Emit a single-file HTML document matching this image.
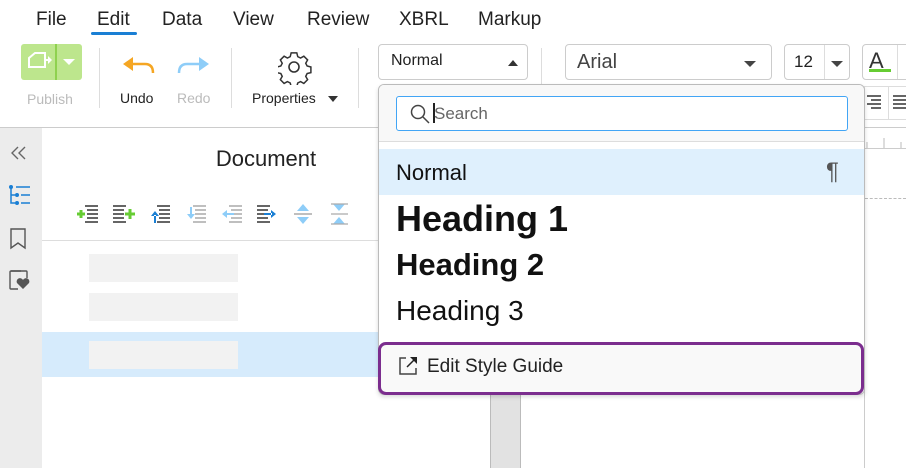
<!DOCTYPE html>
<html><head><style>
*{box-sizing:border-box;margin:0;padding:0}
body{width:906px;height:468px;overflow:hidden;background:#fff;font-family:"Liberation Sans",sans-serif;position:relative;color:#222}
.a{position:absolute}
.menu span{position:absolute;top:9px;font-size:19px;color:#222}
.lbl{position:absolute;font-size:14px;color:#222}
.sep{position:absolute;width:1px;background:#ddd}
.box{position:absolute;border:1px solid #ccc;border-radius:4px;background:#fff}
.tri{position:absolute;width:0;height:0;border-left:6px solid transparent;border-right:6px solid transparent}
</style></head><body>
<div class="menu">
<span style="left:36px">File</span>
<span style="left:97px">Edit</span>
<span style="left:162px">Data</span>
<span style="left:233px">View</span>
<span style="left:307px">Review</span>
<span style="left:399px">XBRL</span>
<span style="left:478px">Markup</span>
</div>
<div class="a" style="left:91px;top:32px;width:46px;height:3px;background:#1a7fd4;border-radius:2px"></div>

<!-- publish -->
<div class="a" style="left:21px;top:44px;width:61px;height:36px;background:#bde68d;border-radius:3px"></div>
<div class="a" style="left:55px;top:44px;width:2px;height:36px;background:#8fd14f"></div>
<svg class="a" style="left:27px;top:52px" width="26" height="18"><path d="M2 15 L2 6 L8 1 L18 1 L18 15 Z" fill="none" stroke="#fff" stroke-width="2"/><path d="M18 8 L24 8" stroke="#fff" stroke-width="2"/><path d="M21 4 L25 8 L21 12Z" fill="#fff"/></svg>
<div class="tri" style="left:63px;top:59px;border-top:6px solid #fff"></div>
<div class="lbl" style="left:27px;top:91px;color:#bbb">Publish</div>
<div class="sep" style="left:99px;top:48px;height:60px"></div>
<svg class="a" style="left:121px;top:55px" width="34" height="24"><path d="M2 9 L12 2 L12 16 Z" fill="#f5a623"/><path d="M11 9 L24 9 Q32 9 32 18" fill="none" stroke="#f5a623" stroke-width="2.5"/></svg>
<div class="lbl" style="left:120px;top:90px">Undo</div>
<svg class="a" style="left:177px;top:55px" width="34" height="24"><path d="M32 9 L22 2 L22 16 Z" fill="#8ecdf8"/><path d="M23 9 L10 9 Q2 9 2 18" fill="none" stroke="#8ecdf8" stroke-width="2.5"/></svg>
<div class="lbl" style="left:177px;top:90px;color:#bbb">Redo</div>
<div class="sep" style="left:231px;top:48px;height:60px"></div>
<svg class="a" style="left:278px;top:51px" width="34" height="34" viewBox="0 0 34 34"><path d="M14 2h6l1 4 3 1.5 3.5-2 4 4-2 3.5 1.5 3 4 1v6l-4 1-1.5 3 2 3.5-4 4-3.5-2-3 1.5-1 4h-6l-1-4-3-1.5-3.5 2-4-4 2-3.5-1.5-3-4-1v-6l4-1 1.5-3-2-3.5 4-4 3.5 2 3-1.5z" fill="none" stroke="#333" stroke-width="1.6" transform="scale(0.94)"/><circle cx="16" cy="16" r="5" fill="none" stroke="#333" stroke-width="1.6"/></svg>
<div class="lbl" style="left:252px;top:90px">Properties</div>
<div class="tri" style="left:328px;top:96px;border-width:5px;border-top:6px solid #333"></div>
<div class="sep" style="left:358px;top:48px;height:60px"></div>

<!-- style select -->
<div class="box" style="left:378px;top:44px;width:150px;height:36px"></div>
<div class="lbl" style="left:391px;top:52px;font-size:16px">Normal</div>
<div class="tri" style="left:508px;top:60px;border-width:5px;border-bottom:6px solid #333"></div>
<div class="sep" style="left:541px;top:48px;height:40px"></div>
<div class="box" style="left:565px;top:44px;width:207px;height:36px"></div>
<div class="lbl" style="left:577px;top:51px;font-size:20px;color:#444">Arial</div>
<div class="tri" style="left:744px;top:61px;border-top:6px solid #444"></div>
<div class="box" style="left:784px;top:44px;width:66px;height:36px"></div>
<div class="sep" style="left:824px;top:45px;height:34px"></div>
<div class="lbl" style="left:794px;top:52px;font-size:17px">12</div>
<div class="tri" style="left:831px;top:61px;border-top:6px solid #444"></div>
<div class="box" style="left:862px;top:44px;width:60px;height:36px"></div>
<div class="lbl" style="left:869px;top:48px;font-size:22px;color:#333">A</div>
<div class="a" style="left:869px;top:69px;width:22px;height:3px;background:#6c3"></div>
<div class="sep" style="left:897px;top:45px;height:34px"></div>
<div class="a" style="left:864px;top:86px;width:50px;height:34px;border:1px solid #ddd;background:#fff"></div>
<div class="sep" style="left:888px;top:86px;height:34px"></div>
<svg class="a" style="left:865px;top:94px" width="41" height="16"><path d="M2 2h14M6 6h10M2 10h14M6 14h10M28 2h14M28 6h14M28 10h14M28 14h14" stroke="#333" stroke-width="1.5"/></svg>
<div class="a" style="left:0;top:127px;width:906px;height:1px;background:#ccc"></div>

<!-- sidebar -->
<div class="a" style="left:0;top:128px;width:42px;height:340px;background:#ececec"></div>
<svg class="a" style="left:9px;top:145px" width="20" height="16"><path d="M9 2L3 8l6 6M16 2l-6 6 6 6" fill="none" stroke="#666" stroke-width="1.4"/></svg>
<svg class="a" style="left:8px;top:184px" width="24" height="24"><circle cx="3" cy="3" r="2" fill="#1a7fd4"/><circle cx="9" cy="11" r="2" fill="#1a7fd4"/><circle cx="9" cy="19" r="2" fill="#1a7fd4"/><path d="M3 3v16h4M3 11h4M8 3h14M13 11h9M13 19h9" fill="none" stroke="#1a7fd4" stroke-width="1.5"/></svg>
<svg class="a" style="left:9px;top:228px" width="20" height="22"><path d="M2 1h14v19l-7-5-7 5z" fill="none" stroke="#555" stroke-width="1.4"/></svg>
<svg class="a" style="left:8px;top:269px" width="22" height="22"><path d="M13 2H3a1 1 0 0 0-1 1v16a1 1 0 0 0 1 1h7" fill="none" stroke="#555" stroke-width="1.4"/><path d="M3 2h15a1 1 0 0 1 1 1v6" fill="none" stroke="#555" stroke-width="1.4"/><path d="M15 20l-6-6a3 3 0 0 1 6-3 3 3 0 0 1 6 3z" fill="#555"/></svg>

<!-- document panel -->
<div class="a" style="left:42px;top:146px;width:448px;text-align:center;font-size:22px;color:#222">Document</div>
<svg class="a" style="left:76px;top:203px" width="280" height="22">
<g stroke="#333" stroke-width="1.5">
<path d="M9 3h13M11 7h11M11 11h11M11 15h11M9 19h13"/>
<path d="M37 3h13M37 7h11M37 11h11M37 15h11M37 19h13"/>
<path d="M81 3h13M83 7h11M83 11h11M83 15h11M81 19h13"/>
<path d="M181 3h13M181 7h11M181 11h11M181 15h11M181 19h13"/></g>
<g stroke="#aaa" stroke-width="1.5">
<path d="M117 3h13M119 7h11M119 11h11M119 15h11M117 19h13"/>
<path d="M153 3h13M155 7h11M155 11h11M155 15h11M153 19h13"/></g>
<path d="M1 11h8M5 7v8" stroke="#6c3" stroke-width="3"/><path d="M49 11h10M54 6v10" stroke="#6c3" stroke-width="3"/>
<path d="M79 8l-4 5h8z M78 12h2v8h-2z" fill="#1a7fd4"/>
<path d="M115 16l-4-5h8z M114 4h2v8h-2z" fill="#8ecdf8"/>
<path d="M146 11l5-4v8z M150 10h8v2h-8z" fill="#8ecdf8"/>
<path d="M200 11l-5-4v8z M188 10h8v2h-8z" fill="#1a7fd4"/>
<path d="M221 8l6-7 6 7z M221 14l6 7 6-7z" fill="#8ecdf8"/><path d="M218 11h18" stroke="#aaa" stroke-width="1.5"/>
<path d="M257 1l6 7 6-7z M257 21l6-7 6 7z" fill="#8ecdf8"/><path d="M255 1h17M255 11h17M255 21h17" stroke="#aaa" stroke-width="1.3"/>
</svg>
<div class="a" style="left:42px;top:240px;width:448px;height:1px;background:#ddd"></div>
<div class="a" style="left:89px;top:254px;width:149px;height:28px;background:#f2f2f2"></div>
<div class="a" style="left:89px;top:293px;width:149px;height:28px;background:#f2f2f2"></div>
<div class="a" style="left:42px;top:332px;width:448px;height:45px;background:#d6ebfc"></div>
<div class="a" style="left:89px;top:341px;width:149px;height:28px;background:#f2f2f2"></div>
<div class="a" style="left:490px;top:128px;width:1px;height:340px;background:#bbb"></div>
<div class="a" style="left:491px;top:380px;width:30px;height:88px;background:#e2e2e2;border-right:1px solid #bbb"></div>
<div class="a" style="left:864px;top:127px;width:1px;height:341px;background:#ccc"></div>
<div class="a" style="left:865px;top:148px;width:41px;height:1px;background:#ccc"></div>
<div class="a" style="left:865px;top:198px;width:41px;border-top:1px dashed #bbb"></div>
<svg class="a" style="left:865px;top:136px" width="41" height="12"><path d="M2 6v6M19 2v10M36 6v6" stroke="#bbb"/></svg>

<!-- dropdown -->
<div class="a" style="left:378px;top:84px;width:487px;height:311px;background:#fff;border:1px solid #bbb;border-radius:6px;box-shadow:0 2px 4px rgba(0,0,0,.15);overflow:hidden">
<div class="a" style="left:0;top:0;width:487px;height:57px;background:#f8f8f8;border-bottom:1px solid #ddd"></div>
<div class="a" style="left:17px;top:11px;width:452px;height:35px;border:1px solid #42a5f5;border-radius:3px;background:#fff"></div>
<svg class="a" style="left:31px;top:19px" width="22" height="22"><circle cx="8" cy="8" r="6.5" fill="none" stroke="#444" stroke-width="1.5"/><path d="M13 13l6 6" stroke="#444" stroke-width="1.5"/></svg>
<div class="a" style="left:54px;top:18px;width:2px;height:20px;background:#222"></div>
<div class="a" style="left:55px;top:19px;font-size:17px;color:#666">Search</div>
<div class="a" style="left:0;top:64px;width:487px;height:46px;background:#dff0fd"></div>
<div class="a" style="left:17px;top:75px;font-size:22px;color:#111">Normal</div>
<div class="a" style="left:447px;top:73px;font-size:24px;color:#555">¶</div>
<div class="a" style="left:17px;top:113px;font-size:36px;font-weight:bold;color:#111">Heading 1</div>
<div class="a" style="left:17px;top:162px;font-size:31px;font-weight:bold;color:#111">Heading 2</div>
<div class="a" style="left:17px;top:210px;font-size:28px;color:#111">Heading 3</div>
</div>
<div class="a" style="left:378px;top:342px;width:486px;height:53px;border:3px solid #7b2d8e;border-radius:8px;background:#f9f9f9"></div>
<svg class="a" style="left:397px;top:355px" width="22" height="22"><path d="M9 3H3v16h16v-6" fill="none" stroke="#444" stroke-width="1.5"/><path d="M10 12l9-9" stroke="#222" stroke-width="1.5"/><path d="M13 2h7v7z" fill="#222"/></svg>
<div class="a" style="left:427px;top:356px;font-size:19px;color:#222">Edit Style Guide</div>
</body></html>
